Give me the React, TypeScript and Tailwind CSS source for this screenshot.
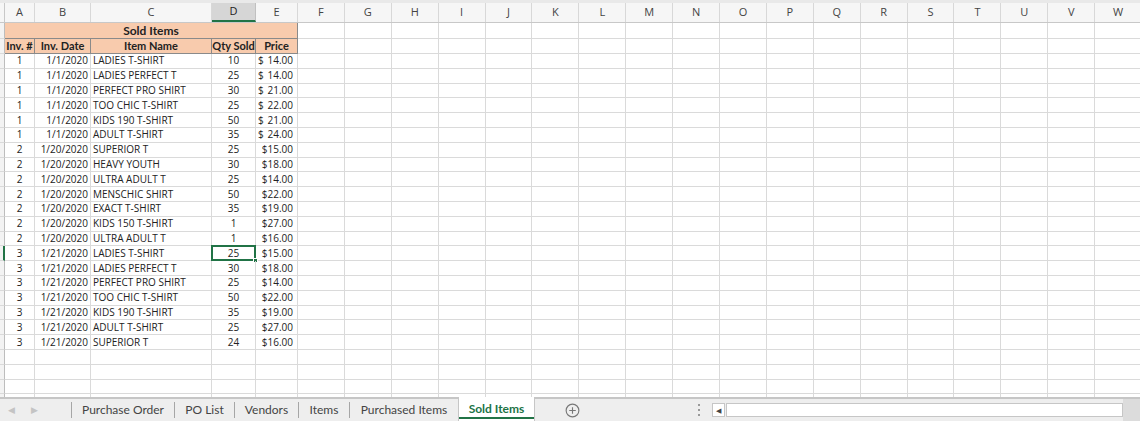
import React from 'react';

type Row = [string, string, string, string, string, boolean];

// inv, date, item, qty, price, accounting format ($ at left edge)
const rows: Row[] = [
  ['1', '1/1/2020', 'LADIES T-SHIRT', '10', '14.00', true],
  ['1', '1/1/2020', 'LADIES PERFECT T', '25', '14.00', true],
  ['1', '1/1/2020', 'PERFECT PRO SHIRT', '30', '21.00', true],
  ['1', '1/1/2020', 'TOO CHIC T-SHIRT', '25', '22.00', true],
  ['1', '1/1/2020', 'KIDS 190 T-SHIRT', '50', '21.00', true],
  ['1', '1/1/2020', 'ADULT T-SHIRT', '35', '24.00', true],
  ['2', '1/20/2020', 'SUPERIOR T', '25', '15.00', false],
  ['2', '1/20/2020', 'HEAVY YOUTH', '30', '18.00', false],
  ['2', '1/20/2020', 'ULTRA ADULT T', '25', '14.00', false],
  ['2', '1/20/2020', 'MENSCHIC SHIRT', '50', '22.00', false],
  ['2', '1/20/2020', 'EXACT T-SHIRT', '35', '19.00', false],
  ['2', '1/20/2020', 'KIDS 150 T-SHIRT', '1', '27.00', false],
  ['2', '1/20/2020', 'ULTRA ADULT T', '1', '16.00', false],
  ['3', '1/21/2020', 'LADIES T-SHIRT', '25', '15.00', false],
  ['3', '1/21/2020', 'LADIES PERFECT T', '30', '18.00', false],
  ['3', '1/21/2020', 'PERFECT PRO SHIRT', '25', '14.00', false],
  ['3', '1/21/2020', 'TOO CHIC T-SHIRT', '50', '22.00', false],
  ['3', '1/21/2020', 'KIDS 190 T-SHIRT', '35', '19.00', false],
  ['3', '1/21/2020', 'ADULT T-SHIRT', '25', '27.00', false],
  ['3', '1/21/2020', 'SUPERIOR T', '24', '16.00', false],
];

const extraCols = ['F', 'G', 'H', 'I', 'J', 'K', 'L', 'M', 'N', 'O', 'P', 'Q', 'R', 'S', 'T', 'U', 'V', 'W'];
const SELECTED = 13;

function EmptyCols() {
  return (
    <>
      {extraCols.map((c) => (
        <div key={c} className="w-[46.9px] shrink-0 border-r border-b border-[#dadada]" />
      ))}
    </>
  );
}

function RowHead({ active }: { active?: boolean }) {
  return (
    <div
      className={`w-[5px] shrink-0 bg-[#f3f3f3] border-b border-[#dadada] border-r ${
        active ? 'border-r-[#217346] border-r-2' : 'border-r-[#bdbdbd]'
      }`}
    />
  );
}

const cell = 'shrink-0 border-r border-b border-[#dadada] flex items-center overflow-hidden whitespace-nowrap';

export default function App() {
  const tabs = [
    { name: 'Purchase Order', w: 'w-[103px]' },
    { name: 'PO List', w: 'w-[60px]' },
    { name: 'Vendors', w: 'w-[64px]' },
    { name: 'Items', w: 'w-[51px]' },
    { name: 'Purchased Items', w: 'w-[108px]' },
  ];

  return (
    <div className="w-[1140px] h-[421px] overflow-hidden bg-white flex flex-col text-[#222] font-['Lato',sans-serif]">
      <div className="h-[3px] shrink-0 bg-[#e9e9e9]" />

      {/* column letters */}
      <div className="h-[20px] shrink-0 flex bg-[#f6f6f6] border-b border-[#c8c8c8] text-[11px] text-[#444] font-['Open_Sans',sans-serif]">
        <div className="w-[5px] shrink-0 border-r border-[#c8c8c8]" />
        {[
          ['A', 'w-[30px]'],
          ['B', 'w-[56px]'],
          ['C', 'w-[121px]'],
        ].map(([l, w]) => (
          <div key={l} className={`${w} shrink-0 border-r border-[#d8d8d8] flex items-center justify-center`}>
            {l}
          </div>
        ))}
        <div className="w-[44px] shrink-0 border-r border-[#c0c0c0] bg-[#d6d6d6] border-b-2 border-b-[#217346] flex items-center justify-center text-[#222]">
          D
        </div>
        <div className="w-[42px] shrink-0 border-r border-[#d8d8d8] flex items-center justify-center">E</div>
        {extraCols.map((c) => (
          <div key={c} className="w-[46.9px] shrink-0 border-r border-[#d8d8d8] flex items-center justify-center">
            {c}
          </div>
        ))}
      </div>

      {/* grid */}
      <div className="flex-1 overflow-hidden flex flex-col text-[10px] font-['Open_Sans',sans-serif]">
        {/* title row */}
        <div className="h-[16px] shrink-0 flex">
          <RowHead />
          <div className="w-[293px] shrink-0 bg-[#f8cbad] border-r border-b border-[#8a8a8a] flex items-center justify-center font-bold text-[12px] font-['Lato',sans-serif]">
            Sold Items
          </div>
          <EmptyCols />
        </div>
        {/* header row */}
        <div className="h-[15px] shrink-0 flex font-bold text-[11px] font-['Lato',sans-serif]">
          <RowHead />
          {[
            ['Inv. #', 'w-[30px]'],
            ['Inv. Date', 'w-[56px]'],
            ['Item Name', 'w-[121px]'],
            ['Qty Sold', 'w-[44px]'],
            ['Price', 'w-[42px]'],
          ].map(([t, w]) => (
            <div
              key={t}
              className={`${w} shrink-0 bg-[#f8cbad] border-r border-b border-[#8a8a8a] flex items-center justify-center whitespace-nowrap`}
            >
              {t}
            </div>
          ))}
          <EmptyCols />
        </div>

        {rows.map((r, i) => (
          <div key={i} className="h-[14.8px] shrink-0 flex">
            <RowHead active={i === SELECTED} />
            <div className={`${cell} w-[30px] justify-center`}>{r[0]}</div>
            <div className={`${cell} w-[56px] justify-end pr-[2px]`}>{r[1]}</div>
            <div className={`${cell} w-[121px] pl-[2px]`}>{r[2]}</div>
            <div className={`${cell} w-[44px] justify-center relative overflow-visible`}>
              {r[3]}
              {i === SELECTED && (
                <>
                  <div className="absolute -left-px -top-px -right-px -bottom-px border-2 border-[#217346]" />
                  <div className="absolute -right-[3px] -bottom-[3px] w-[5px] h-[5px] bg-[#217346] border border-white" />
                </>
              )}
            </div>
            <div className={`${cell} w-[42px] pr-[4px] ${r[5] ? 'justify-between pl-[2px]' : 'justify-end'}`}>
              {r[5] ? (
                <>
                  <span>$</span>
                  <span>{r[4]}</span>
                </>
              ) : (
                <span>${r[4]}</span>
              )}
            </div>
            <EmptyCols />
          </div>
        ))}

        {Array.from({ length: 5 }).map((_, i) => (
          <div key={'e' + i} className="h-[14.8px] shrink-0 flex">
            <RowHead />
            <div className={`${cell} w-[30px]`} />
            <div className={`${cell} w-[56px]`} />
            <div className={`${cell} w-[121px]`} />
            <div className={`${cell} w-[44px]`} />
            <div className={`${cell} w-[42px]`} />
            <EmptyCols />
          </div>
        ))}
      </div>

      {/* sheet tabs */}
      <div className="h-[24px] shrink-0 flex items-stretch bg-[#eeeeee] border-t-2 border-[#c6c6c6] text-[12px] text-[#444]">
        <div className="w-[72px] shrink-0 flex items-center text-[9px] text-[#c4c4c4] border-r border-[#a6a6a6] my-[3px]">
          <span className="ml-[8px]">◀</span>
          <span className="ml-[16px]">▶</span>
        </div>
        {tabs.map((t, i) => (
          <div
            key={t.name}
            className={`${t.w} shrink-0 flex items-center justify-center ${
              i < tabs.length - 1 ? 'border-r border-[#a6a6a6] my-[3px]' : ''
            }`}
          >
            {t.name}
          </div>
        ))}
        <div className="w-[77px] shrink-0 -mt-[2px] bg-white border-x border-[#c6c6c6] flex items-center justify-center font-bold text-[#217346] relative">
          Sold Items
          <div className="absolute left-0 right-0 bottom-[2px] h-[2px] bg-[#217346]" />
        </div>
        <div className="w-[74px] shrink-0 flex items-center justify-center">
          <svg width="15" height="15" viewBox="0 0 16 16" fill="none" stroke="#777" strokeWidth="1.2">
            <circle cx="8" cy="8" r="6.8" />
            <path d="M8 4.5v7M4.5 8h7" />
          </svg>
        </div>
        <div className="flex-1" />
        <div className="w-[8px] shrink-0 flex flex-col items-center justify-center gap-[3px] mr-[9px]">
          <div className="w-[2px] h-[2px] bg-[#999]" />
          <div className="w-[2px] h-[2px] bg-[#999]" />
          <div className="w-[2px] h-[2px] bg-[#999]" />
        </div>
        <div className="w-[411px] shrink-0 flex items-center py-[4px]">
          <div className="w-[13px] h-[14px] bg-white border border-[#c6c6c6] flex items-center justify-center text-[7px] text-[#444]">
            ◀
          </div>
          <div className="ml-[1px] w-[397px] h-[14px] bg-white border border-[#c6c6c6]" />
        </div>
        <div className="w-[17px] shrink-0 bg-[#dcdcdc]" />
      </div>
    </div>
  );
}
